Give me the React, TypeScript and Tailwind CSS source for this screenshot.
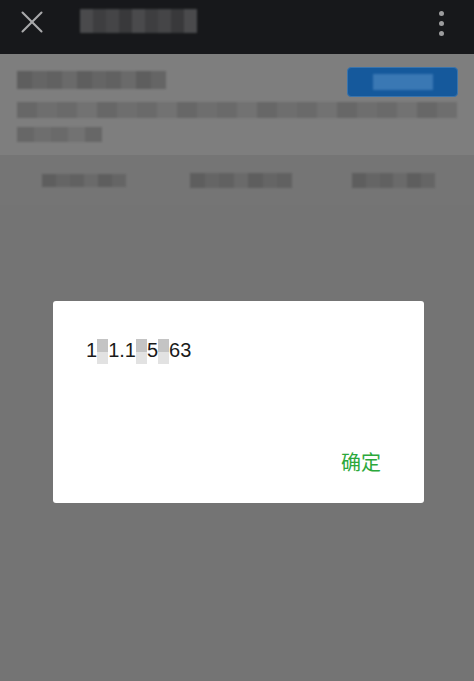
import { X } from 'lucide-react'

const masks = ['bg-[#656565]', 'bg-[#5e5e5e]', 'bg-[#6a6a6a]', 'bg-[#616161]']

function Mosaic({ w, h, tone = 'mid', cells = 8 }: { w: number; h: number; tone?: 'dark' | 'mid' | 'light'; cells?: number }) {
  const palette =
    tone === 'dark'
      ? ['bg-[#3e3e40]', 'bg-[#4a4a4c]', 'bg-[#39393b]', 'bg-[#454547]']
      : tone === 'light'
        ? ['bg-[#6e6e6e]', 'bg-[#676767]', 'bg-[#727272]', 'bg-[#6a6a6a]']
        : masks
  return (
    <div className="flex blur-[1px]" style={{ width: w, height: h }}>
      {Array.from({ length: cells }).map((_, i) => (
        <div key={i} className={`flex-1 ${palette[(i * 3 + 1) % palette.length]}`} />
      ))}
    </div>
  )
}

function Masked() {
  return (
    <span className="relative inline-block w-[11px] text-transparent">
      0
      <span className="absolute left-0 top-[1px] w-[11px] h-[13px] bg-[#c4c4c4]" />
      <span className="absolute left-0 top-[14px] w-[11px] h-[12px] bg-[#e2e2e2]" />
    </span>
  )
}

export default function App() {
  return (
    <div className="relative w-[474px] h-[681px] overflow-hidden bg-[#747474] font-['Liberation_Sans','Noto_Sans_CJK_SC',sans-serif]">
      {/* top bar */}
      <div className="h-[54px] bg-[#17181b] flex items-start pl-[13px] pr-[30px]">
        <X className="mt-[3px] w-[38px] h-[38px] text-[#a9a9ab]" strokeWidth={1.3} />
        <div className="ml-[29px] mt-[9px]">
          <Mosaic w={117} h={24} tone="dark" cells={9} />
        </div>
        <div className="ml-auto mt-[11px] flex flex-col gap-[5px] items-center">
          <span className="w-[5px] h-[5px] rounded-full bg-[#9c9c9e]" />
          <span className="w-[5px] h-[5px] rounded-full bg-[#9c9c9e]" />
          <span className="w-[5px] h-[5px] rounded-full bg-[#9c9c9e]" />
        </div>
      </div>

      {/* info section */}
      <div className="h-[101px] bg-[#7e7e7e] px-[17px] pt-[13px]">
        <div className="flex items-start justify-between">
          <div className="mt-[4px]">
            <Mosaic w={149} h={18} tone="mid" cells={10} />
          </div>
          <div className="w-[111px] h-[30px] rounded-[4px] bg-[#15599c] border border-[#3a74ac] flex items-center justify-center -mr-[1px]">
            <div className="w-[60px] h-[16px] bg-[#3a78b4] blur-[1px]" />
          </div>
        </div>
        <div className="mt-[5px]">
          <Mosaic w={440} h={16} tone="light" cells={22} />
        </div>
        <div className="mt-[9px]">
          <Mosaic w={85} h={15} tone="light" cells={5} />
        </div>
      </div>

      {/* tabs */}
      <div className="h-[50px] bg-[#757575] flex items-center">
        <div className="ml-[42px]">
          <Mosaic w={84} h={13} tone="mid" cells={6} />
        </div>
        <div className="ml-[64px]">
          <Mosaic w={102} h={15} tone="mid" cells={7} />
        </div>
        <div className="ml-[60px]">
          <Mosaic w={83} h={15} tone="mid" cells={6} />
        </div>
      </div>

      {/* dialog */}
      <div className="absolute left-[53px] top-[301px] w-[371px] h-[202px] bg-white rounded-[3px] flex flex-col pl-[33px] pr-[43px] pt-[37px] pb-[28px]">
        <div className="text-[20px] leading-[24px] text-[#1a1a1a]">
          1<Masked />1.1<Masked />5<Masked />63
        </div>
        <div className="mt-auto self-end text-[20px] leading-[24px] text-[#2ba83b]">确定</div>
      </div>
    </div>
  )
}
